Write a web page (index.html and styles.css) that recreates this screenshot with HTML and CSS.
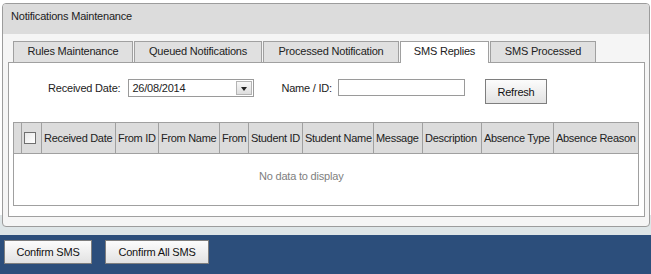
FILE: index.html
```html
<!DOCTYPE html>
<html lang="en">
<head>
<meta charset="utf-8">
<title>Notifications Maintenance</title>
<link rel="stylesheet" href="styles.css">
</head>
<body>
<div class="page">
  <div class="panel">
    <div class="panel-header">Notifications Maintenance</div>
    <div class="panel-body">
      <div class="tabs">
        <div class="tab t-rules">Rules Maintenance</div>
        <div class="tab t-queued">Queued Notifications</div>
        <div class="tab t-processed">Processed Notification</div>
        <div class="tab t-replies active">SMS Replies</div>
        <div class="tab t-smsproc">SMS Processed</div>
      </div>
      <div class="tab-content">
        <div class="filters">
          <span class="field-label">Received Date:</span>
          <div class="date-box">
            <span class="date-text">26/08/2014</span>
            <span class="drop-btn"><span class="caret"></span></span>
          </div>
          <span class="field-label name-label">Name / ID:</span>
          <div class="text-box"></div>
          <button class="btn refresh">Refresh</button>
        </div>
        <div class="grid">
          <div class="grid-head">
            <div class="cell c-ind"></div>
            <div class="cell c-chk"><span class="cb"></span></div>
            <div class="cell c-rd">Received Date</div>
            <div class="cell c-fid">From ID</div>
            <div class="cell c-fname">From Name</div>
            <div class="cell c-from">From</div>
            <div class="cell c-sid">Student ID</div>
            <div class="cell c-sname">Student Name</div>
            <div class="cell c-msg">Message</div>
            <div class="cell c-desc">Description</div>
            <div class="cell c-atype">Absence Type</div>
            <div class="cell c-areason">Absence Reason</div>
          </div>
          <div class="grid-body">
            <div class="empty">No data to display</div>
          </div>
        </div>
      </div>
    </div>
  </div>
</div>
<div class="footer">
  <button class="btn confirm">Confirm SMS</button>
  <button class="btn confirm-all">Confirm All SMS</button>
</div>
</body>
</html>
```
FILE: styles.css
```css
* {
  box-sizing: border-box;
}

html, body {
  margin: 0;
  width: 651px;
  height: 274px;
  overflow: hidden;
}

body {
  font-family: "Liberation Sans", Arial, sans-serif;
  font-size: 11px;
  letter-spacing: -0.2px;
  color: #222;
  background: #fff;
}

.page {
  background: linear-gradient(#ffffff 215px, #dee5e7 215px);
  padding: 3px 1px 8px 2px;
}

.panel {
  height: 224px;
  border: 1px solid #9c9c9c;
  border-radius: 4px;
  background: #f5f5f5;
  overflow: hidden;
  display: flex;
  flex-direction: column;
}

.panel-header {
  height: 30px;
  background: #dcdcdc;
  padding: 6px 8px 0;
  line-height: 13px;
  color: #222;
}

.panel-body {
  flex: 1;
  padding: 7px 4px 9px 5px;
  display: flex;
  flex-direction: column;
}

.tabs {
  display: flex;
  align-items: flex-start;
  gap: 1px;
  height: 21px;
  padding-left: 5px;
}

.tab {
  height: 21px;
  line-height: 19px;
  border: 1px solid #a0a0a0;
  border-bottom: none;
  background: #e0e0e0;
  color: #222;
  text-align: center;
  white-space: nowrap;
}

.t-rules { width: 120px; }
.t-queued { width: 128px; }
.t-processed { width: 136px; }
.t-replies { width: 89px; }
.t-smsproc { width: 106px; }

.tab.active {
  height: 22px;
  background: #fff;
  position: relative;
  z-index: 1;
}

.tab-content {
  height: 155px;
  border: 1px solid #a0a0a0;
  background: #fff;
  padding: 16px 5px 10px 4px;
}

.filters {
  display: flex;
  align-items: flex-start;
  height: 25px;
  padding-left: 35px;
}

.field-label {
  line-height: 18px;
  white-space: nowrap;
}

.date-box {
  width: 126px;
  height: 18px;
  margin-left: 8px;
  border: 1px solid #9a9a9a;
  background: #fff;
  display: flex;
  justify-content: space-between;
  align-items: flex-start;
  padding: 0 1px 0 3px;
}

.date-text {
  line-height: 14px;
  padding-top: 1px;
}

.drop-btn {
  width: 16px;
  height: 14px;
  margin-top: 1px;
  border: 1px solid #b4b4b4;
  background: linear-gradient(#f8f8f8, #dedede);
  display: flex;
  align-items: center;
  justify-content: center;
}

.caret {
  width: 0;
  height: 0;
  border-left: 3px solid transparent;
  border-right: 3px solid transparent;
  border-top: 4px solid #222;
  margin-top: 1px;
}

.name-label {
  margin-left: 27px;
}

.text-box {
  width: 127px;
  height: 17px;
  margin-left: 6px;
  border: 1px solid #9a9a9a;
  background: #fff;
}

.btn {
  font-family: "Liberation Sans", Arial, sans-serif;
  font-size: 11px;
  letter-spacing: -0.2px;
  color: #111;
  border: 1px solid #7e7e7e;
  background: linear-gradient(#fcfcfc, #e2e2e2);
  padding: 0;
  margin: 0;
  text-align: center;
}

.refresh {
  width: 62px;
  height: 25px;
  margin-left: 20px;
}

.grid {
  margin-top: 18px;
  width: 626px;
  height: 84px;
  border: 1px solid #a0a0a0;
  display: flex;
  flex-direction: column;
}

.grid-head {
  display: flex;
  height: 31px;
  background: #dcdcdc;
  border-bottom: 1px solid #a0a0a0;
}

.cell {
  height: 30px;
  line-height: 30px;
  padding: 0 1px 0 2px;
  border-right: 1px solid #a0a0a0;
  letter-spacing: -0.3px;
  white-space: nowrap;
  overflow: hidden;
  color: #222;
  flex: none;
}

.c-ind { width: 8px; }
.c-chk { width: 20px; display: flex; align-items: center; padding-left: 2px; }
.c-rd { width: 74px; }
.c-fid { width: 43px; }
.c-fname { width: 61px; }
.c-from { width: 29px; }
.c-sid { width: 54px; }
.c-sname { width: 71px; }
.c-msg { width: 49px; }
.c-desc { width: 59px; }
.c-atype { width: 72px; }
.c-areason { width: 84px; border-right: none; }

.cb {
  display: block;
  width: 12px;
  height: 12px;
  border: 1px solid #6f6f6f;
  background: linear-gradient(135deg, #e8e8e8, #ffffff);
}

.grid-body {
  flex: 1;
  background: #fff;
}

.empty {
  padding: 15px 0 0 245px;
  line-height: 14px;
  color: #808080;
}

.footer {
  height: 39px;
  background: #2c4e7b;
  padding: 5px 4px 0;
  display: flex;
  align-items: flex-start;
  gap: 13px;
}

.confirm {
  width: 88px;
  height: 24px;
}

.confirm-all {
  width: 104px;
  height: 24px;
}
```
